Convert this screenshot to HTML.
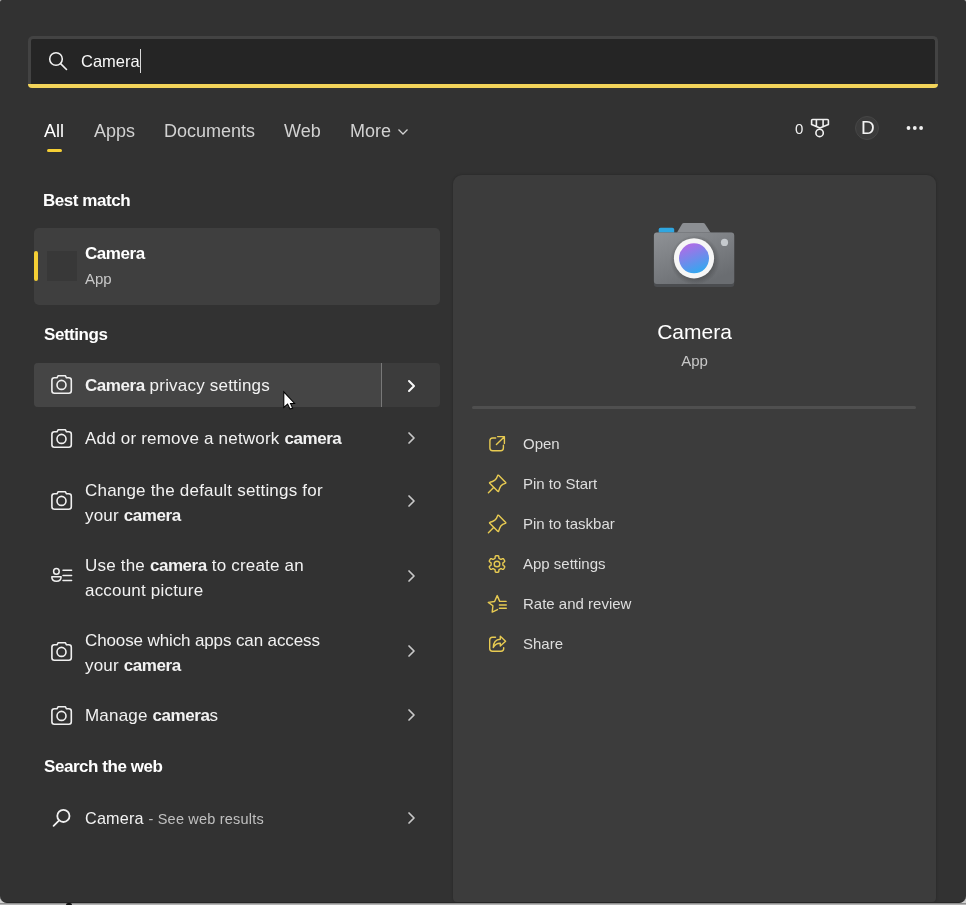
<!DOCTYPE html>
<html><head><meta charset="utf-8">
<style>
*{margin:0;padding:0;box-sizing:border-box}
html,body{width:966px;height:905px;overflow:hidden;background:#d0d0d0;font-family:"Liberation Sans",sans-serif}
#win{position:absolute;left:0;top:0;width:966px;height:903px;background:#323232;border-radius:2px 2px 7px 7px;overflow:hidden;border-bottom:1px solid #262626}
#strip1{position:absolute;left:0;top:903px;width:966px;height:1px;background:#8e8e8e}
#strip2{position:absolute;left:0;top:904px;width:966px;height:1px;background:#b4b4b4}
.a{position:absolute;white-space:nowrap}
.t,.tab,.hdr,.row,.mi{will-change:transform}
.t{position:absolute;white-space:nowrap;line-height:1}
b{font-weight:bold}
#search{position:absolute;left:28px;top:36px;width:910px;height:51.5px;background:#252525;border:3px solid #434343;border-bottom:none;border-radius:5px 5px 4px 4px}
#search .ul{position:absolute;left:-3px;right:-3px;bottom:0;height:3.5px;background:#f3d45a;border-radius:0 0 4px 4px}
.tab{position:absolute;font-size:18px;line-height:1;color:#d2d2d2;top:121.5px}
.hdr{position:absolute;font-size:17px;font-weight:bold;line-height:1;color:#fff;letter-spacing:-0.45px}
.row{position:absolute;left:85px;font-size:17px;line-height:25px;color:#f2f2f2;white-space:nowrap;letter-spacing:0.2px}
.row b{letter-spacing:-0.45px}
.ico{position:absolute;left:50px}
.chev{position:absolute;left:404px}
#panel{position:absolute;left:453px;top:175px;width:483px;height:727px;background:#3c3c3c;border-radius:9px 9px 4px 4px;box-shadow:0 0 3px rgba(0,0,0,0.25)}
.mi{position:absolute;left:523px;font-size:15px;line-height:1;color:#dedede}
.mico{position:absolute;left:486px}
</style></head><body>
<div id="strip1"></div><div id="strip2"></div><div style="position:absolute;left:66px;top:903px;width:6px;height:2px;border-radius:3px 3px 0 0;background:#111"></div>
<div id="win">
  <div id="search"><div class="ul"></div></div>
  <svg class="a" style="left:48px;top:51px" width="20" height="20" viewBox="0 0 20 20"><circle cx="8" cy="8" r="6.3" fill="none" stroke="#f0f0f0" stroke-width="1.6"/><path d="M12.6 12.6 L18.5 18.5" stroke="#f0f0f0" stroke-width="1.6" stroke-linecap="round"/></svg>
  <div class="t" style="left:81px;top:52.8px;font-size:16.5px;color:#f8f8f8">Camera</div>
  <div class="a" style="left:140px;top:49px;width:1px;height:24px;background:#d8d8d8"></div>

  <div class="tab" style="left:44px;color:#fff">All</div>
  <div class="a" style="left:47px;top:149px;width:15px;height:3px;border-radius:2px;background:#f5cf35"></div>
  <div class="tab" style="left:94px">Apps</div>
  <div class="tab" style="left:164px">Documents</div>
  <div class="tab" style="left:284px">Web</div>
  <div class="tab" style="left:350px">More</div>
  <svg class="a" style="left:397px;top:128px" width="12" height="8" viewBox="0 0 12 8"><path d="M1.5 1.5 L6 6 L10.5 1.5" fill="none" stroke="#d2d2d2" stroke-width="1.3"/></svg>

  <div class="t" style="left:795px;top:120.5px;font-size:15px;color:#f0f0f0">0</div>
  <svg class="a" style="left:809px;top:118px" width="22" height="20" viewBox="0 0 22 20"><path d="M2.6 2.6Q2.6 1.5 3.7 1.5H18.3Q19.4 1.5 19.4 2.6V6.6L10.9 10.1L2.6 6.6Z M7.4 1.8V8.3M14.1 1.8V8.3" fill="none" stroke="#f0f0f0" stroke-width="1.6" stroke-linejoin="round"/><circle cx="10.6" cy="14.9" r="3.7" fill="#323232" stroke="#f0f0f0" stroke-width="1.6"/></svg>
  <div class="a" style="left:854.5px;top:115.5px;width:24.5px;height:24.5px;border-radius:50%;background:#3b3b3b;border:1.5px solid #464646"></div>
  <div class="t" style="left:861px;top:118.4px;font-size:19px;color:#f4f4f4">D</div>
  <svg class="a" style="left:905px;top:124px" width="20" height="8" viewBox="0 0 20 8"><circle cx="3.5" cy="4" r="1.9" fill="#f0f0f0"/><circle cx="9.8" cy="4" r="1.9" fill="#f0f0f0"/><circle cx="16.1" cy="4" r="1.9" fill="#f0f0f0"/></svg>

  <!-- left column -->
  <div class="hdr" style="left:42.5px;top:191.6px">Best match</div>
  <div class="a" style="left:34px;top:228px;width:406px;height:77px;border-radius:5px;background:#3f3f3f"></div>
  <div class="a" style="left:34px;top:251px;width:3.5px;height:30px;border-radius:2px;background:#f5cf35"></div>
  <div class="a" style="left:47px;top:251px;width:30px;height:30px;background:#383838"></div>
  <div class="t" style="left:84.6px;top:245.2px;font-size:17px;font-weight:bold;color:#fff;letter-spacing:-0.45px">Camera</div>
  <div class="t" style="left:85px;top:271px;font-size:15px;color:#c8c8c8">App</div>

  <div class="hdr" style="left:43.5px;top:325.8px">Settings</div>
  <div class="a" style="left:34px;top:363px;width:406px;height:44px;border-radius:4px;background:#3c3c3c"></div>
  <div class="a" style="left:34px;top:363px;width:347px;height:44px;border-radius:4px 0 0 4px;background:#454545"></div>
  <div class="a" style="left:381px;top:363px;width:1px;height:44px;background:#787878"></div>

  <svg class="ico" style="top:374px" width="24" height="22" viewBox="0 0 24 22"><path d="M1.9 6.3Q1.9 3.8 4.4 3.8H7L8.2 1.7H15.3L16.5 3.8H18.8Q21.3 3.8 21.3 6.3V16.7Q21.3 19.2 18.8 19.2H4.4Q1.9 19.2 1.9 16.7Z" fill="none" stroke="#f0f0f0" stroke-width="1.6" stroke-linejoin="round"/><circle cx="11.5" cy="10.9" r="4.5" fill="none" stroke="#f0f0f0" stroke-width="1.6"/></svg><div class="row" style="top:372.6px"><b>Camera</b> privacy settings</div><svg class="chev" style="top:378.5px" width="14" height="14" viewBox="0 0 14 14"><path d="M5 2L10 7L5 12" fill="none" stroke="#f8f8f8" stroke-width="2" stroke-linecap="round" stroke-linejoin="round"/></svg>
  <svg class="ico" style="top:427.5px" width="24" height="22" viewBox="0 0 24 22"><path d="M1.9 6.3Q1.9 3.8 4.4 3.8H7L8.2 1.7H15.3L16.5 3.8H18.8Q21.3 3.8 21.3 6.3V16.7Q21.3 19.2 18.8 19.2H4.4Q1.9 19.2 1.9 16.7Z" fill="none" stroke="#f0f0f0" stroke-width="1.6" stroke-linejoin="round"/><circle cx="11.5" cy="10.9" r="4.5" fill="none" stroke="#f0f0f0" stroke-width="1.6"/></svg><div class="row" style="top:425.6px">Add or remove a network <b>camera</b></div><svg class="chev" style="top:431px" width="14" height="14" viewBox="0 0 14 14"><path d="M5 2L10 7L5 12" fill="none" stroke="#c8c8c8" stroke-width="1.7" stroke-linecap="round" stroke-linejoin="round"/></svg>
  <svg class="ico" style="top:490px" width="24" height="22" viewBox="0 0 24 22"><path d="M1.9 6.3Q1.9 3.8 4.4 3.8H7L8.2 1.7H15.3L16.5 3.8H18.8Q21.3 3.8 21.3 6.3V16.7Q21.3 19.2 18.8 19.2H4.4Q1.9 19.2 1.9 16.7Z" fill="none" stroke="#f0f0f0" stroke-width="1.6" stroke-linejoin="round"/><circle cx="11.5" cy="10.9" r="4.5" fill="none" stroke="#f0f0f0" stroke-width="1.6"/></svg><div class="row" style="top:477.9px">Change the default settings for<br>your <b>camera</b></div><svg class="chev" style="top:494.4px" width="14" height="14" viewBox="0 0 14 14"><path d="M5 2L10 7L5 12" fill="none" stroke="#c8c8c8" stroke-width="1.7" stroke-linecap="round" stroke-linejoin="round"/></svg>
  <svg class="ico" style="top:564px" width="24" height="22" viewBox="0 0 24 22"><circle cx="6.4" cy="7.4" r="2.8" fill="none" stroke="#f0f0f0" stroke-width="1.5"/><path d="M1.8 12.7H11.1Q11.1 17.2 6.45 17.2Q1.8 17.2 1.8 12.7Z" fill="none" stroke="#f0f0f0" stroke-width="1.5" stroke-linejoin="round"/><path d="M13 6.2H21.6M13 11.4H21.6M13 16.5H21.6" stroke="#f0f0f0" stroke-width="1.5" stroke-linecap="round"/></svg><div class="row" style="top:552.7px">Use the <b>camera</b> to create an<br>account picture</div><svg class="chev" style="top:569px" width="14" height="14" viewBox="0 0 14 14"><path d="M5 2L10 7L5 12" fill="none" stroke="#c8c8c8" stroke-width="1.7" stroke-linecap="round" stroke-linejoin="round"/></svg>
  <svg class="ico" style="top:641px" width="24" height="22" viewBox="0 0 24 22"><path d="M1.9 6.3Q1.9 3.8 4.4 3.8H7L8.2 1.7H15.3L16.5 3.8H18.8Q21.3 3.8 21.3 6.3V16.7Q21.3 19.2 18.8 19.2H4.4Q1.9 19.2 1.9 16.7Z" fill="none" stroke="#f0f0f0" stroke-width="1.6" stroke-linejoin="round"/><circle cx="11.5" cy="10.9" r="4.5" fill="none" stroke="#f0f0f0" stroke-width="1.6"/></svg><div class="row" style="top:627.9px"><span style="letter-spacing:-0.12px">Choose which apps can access</span><br>your <b>camera</b></div><svg class="chev" style="top:644.4px" width="14" height="14" viewBox="0 0 14 14"><path d="M5 2L10 7L5 12" fill="none" stroke="#c8c8c8" stroke-width="1.7" stroke-linecap="round" stroke-linejoin="round"/></svg>
  <svg class="ico" style="top:705px" width="24" height="22" viewBox="0 0 24 22"><path d="M1.9 6.3Q1.9 3.8 4.4 3.8H7L8.2 1.7H15.3L16.5 3.8H18.8Q21.3 3.8 21.3 6.3V16.7Q21.3 19.2 18.8 19.2H4.4Q1.9 19.2 1.9 16.7Z" fill="none" stroke="#f0f0f0" stroke-width="1.6" stroke-linejoin="round"/><circle cx="11.5" cy="10.9" r="4.5" fill="none" stroke="#f0f0f0" stroke-width="1.6"/></svg><div class="row" style="top:702.7px">Manage <b>camera</b>s</div><svg class="chev" style="top:708px" width="14" height="14" viewBox="0 0 14 14"><path d="M5 2L10 7L5 12" fill="none" stroke="#c8c8c8" stroke-width="1.7" stroke-linecap="round" stroke-linejoin="round"/></svg>
  <svg class="a" style="left:50px;top:806px" width="24" height="24" viewBox="0 0 24 24"><circle cx="13.4" cy="9.9" r="6.1" fill="none" stroke="#f0f0f0" stroke-width="1.8"/><path d="M8.9 14.6L3.6 19.9" stroke="#f0f0f0" stroke-width="1.8" stroke-linecap="round"/></svg><div class="row" style="top:806px;font-size:16.2px">Camera <span style="font-size:14.5px;color:#c0c0c0">- See web results</span></div><svg class="chev" style="top:810.6px" width="14" height="14" viewBox="0 0 14 14"><path d="M5 2L10 7L5 12" fill="none" stroke="#c8c8c8" stroke-width="1.7" stroke-linecap="round" stroke-linejoin="round"/></svg>

  <div class="hdr" style="left:43.5px;top:758px">Search the web</div>
  <svg class="a" style="left:282px;top:390px" width="16" height="22" viewBox="0 0 16 22"><path d="M1.8 1.8V17.3L5.6 14.1L8 18.9L10.6 18.1L8.5 13.5H12.6Z" fill="#fff" stroke="#000" stroke-width="1.05" stroke-linejoin="miter"/></svg>

  <!-- right panel -->
  <div id="panel"></div>
  <svg class="a" style="left:650px;top:218px" width="90" height="74" viewBox="0 0 90 74">
    <defs>
      <linearGradient id="bg" x1="0" y1="0" x2="0.6" y2="1"><stop offset="0" stop-color="#8f9296"/><stop offset="1" stop-color="#6a6d71"/></linearGradient>
      <linearGradient id="lg" x1="0.3" y1="0" x2="0.7" y2="1"><stop offset="0" stop-color="#b36ae6"/><stop offset="1" stop-color="#2eaaf0"/></linearGradient>
      <radialGradient id="sh" cx="0.5" cy="0.5" r="0.5"><stop offset="0.7" stop-color="#000" stop-opacity="0.25"/><stop offset="1" stop-color="#000" stop-opacity="0"/></radialGradient>
    </defs>
    <rect x="8.7" y="9.8" width="15.5" height="7" rx="1.8" fill="#2fa6e0"/>
    <path d="M26.6 15.2L32 5.9Q32.6 5 33.8 5H53.2Q54.4 5 55 5.9L61 15.2Z" fill="#8c8f93"/>
    <rect x="3.9" y="14.6" width="80.3" height="54.4" rx="3" fill="#4b4d50"/>
    <rect x="3.9" y="14.6" width="80.3" height="51.4" rx="3" fill="url(#bg)"/>
    <circle cx="45" cy="42" r="25" fill="url(#sh)"/>
    <circle cx="74.5" cy="24.4" r="3.6" fill="#c5c9cd"/>
    <circle cx="44" cy="40.3" r="20.1" fill="#f6f6f6"/>
    <circle cx="44" cy="40.3" r="15" fill="url(#lg)"/>
  </svg>
  <div class="t" style="left:453px;width:483px;text-align:center;top:321.2px;font-size:21px;color:#fff">Camera</div>
  <div class="t" style="left:453px;width:483px;text-align:center;top:352.8px;font-size:15px;color:#c8c8c8">App</div>
  <div class="a" style="left:472px;top:406px;width:444px;height:3px;border-radius:1.5px;background:#4f4f4f"></div>
  <svg class="mico" style="top:433.1px" width="22" height="22" viewBox="0 0 22 22" fill="none" stroke="#e8cb52" stroke-width="1.4" stroke-linecap="round" stroke-linejoin="round"><path d="M9.7 5H6.6Q3.9 5 3.9 7.7V15.1Q3.9 17.8 6.6 17.8H14.7Q17.4 17.8 17.4 15.1V12.2"/><path d="M10.4 11.6L18.4 3.7M11.6 3.6H18.4V10.5"/></svg>
  <div class="mi" style="top:436.4px">Open</div>
  <svg class="mico" style="top:472.7px" width="22" height="22" viewBox="0 0 22 22" fill="none" stroke="#e8cb52" stroke-width="1.4" stroke-linecap="round" stroke-linejoin="round"><path d="M12.6 2.3L19.7 9.4Q20.1 10.1 19.3 10.4Q16.4 11 14.6 13.3Q13.3 15.5 12.7 18Q12.4 18.9 11.7 18.3L3.7 10.3Q3.2 9.6 4 9.3Q6.6 8.7 8.8 7.1Q10.9 5.3 11.6 2.7Q12 1.8 12.6 2.3Z"/><path d="M7.6 14.6L2.4 19.8"/></svg>
  <div class="mi" style="top:476.0px">Pin to Start</div>
  <svg class="mico" style="top:512.7px" width="22" height="22" viewBox="0 0 22 22" fill="none" stroke="#e8cb52" stroke-width="1.4" stroke-linecap="round" stroke-linejoin="round"><path d="M12.6 2.3L19.7 9.4Q20.1 10.1 19.3 10.4Q16.4 11 14.6 13.3Q13.3 15.5 12.7 18Q12.4 18.9 11.7 18.3L3.7 10.3Q3.2 9.6 4 9.3Q6.6 8.7 8.8 7.1Q10.9 5.3 11.6 2.7Q12 1.8 12.6 2.3Z"/><path d="M7.6 14.6L2.4 19.8"/></svg>
  <div class="mi" style="top:516.0px">Pin to taskbar</div>
  <svg class="mico" style="top:552.7px" width="22" height="22" viewBox="0 0 22 22" fill="none" stroke="#e8cb52" stroke-width="1.4" stroke-linecap="round" stroke-linejoin="round"><path d="M16.90 11.00 L16.90 11.15 L16.90 11.31 L16.89 11.46 L16.88 11.62 L16.88 11.77 L16.88 11.93 L16.92 12.10 L17.06 12.29 L17.36 12.53 L17.86 12.84 L18.34 13.17 L18.62 13.47 L18.71 13.73 L18.70 13.95 L18.64 14.17 L18.57 14.37 L18.48 14.57 L18.39 14.77 L18.29 14.96 L18.18 15.15 L18.07 15.33 L17.96 15.52 L17.83 15.70 L17.70 15.87 L17.56 16.04 L17.41 16.19 L17.22 16.31 L16.95 16.36 L16.55 16.27 L16.02 16.02 L15.51 15.75 L15.14 15.60 L14.91 15.58 L14.75 15.63 L14.61 15.70 L14.48 15.78 L14.35 15.87 L14.22 15.95 L14.08 16.03 L13.95 16.11 L13.82 16.19 L13.68 16.26 L13.54 16.33 L13.41 16.40 L13.27 16.47 L13.13 16.56 L13.01 16.68 L12.91 16.89 L12.86 17.28 L12.84 17.86 L12.79 18.44 L12.67 18.83 L12.49 19.04 L12.29 19.14 L12.08 19.20 L11.87 19.24 L11.65 19.27 L11.43 19.28 L11.22 19.29 L11.00 19.30 L10.78 19.29 L10.57 19.28 L10.35 19.27 L10.13 19.24 L9.92 19.20 L9.71 19.14 L9.51 19.04 L9.33 18.83 L9.21 18.44 L9.16 17.86 L9.14 17.28 L9.09 16.89 L8.99 16.68 L8.87 16.56 L8.73 16.47 L8.59 16.40 L8.46 16.33 L8.32 16.26 L8.18 16.19 L8.05 16.11 L7.92 16.03 L7.78 15.95 L7.65 15.87 L7.52 15.78 L7.39 15.70 L7.25 15.63 L7.09 15.58 L6.86 15.60 L6.49 15.75 L5.98 16.02 L5.45 16.27 L5.05 16.36 L4.78 16.31 L4.59 16.19 L4.44 16.04 L4.30 15.87 L4.17 15.70 L4.04 15.52 L3.93 15.33 L3.82 15.15 L3.71 14.96 L3.61 14.77 L3.52 14.57 L3.43 14.37 L3.36 14.17 L3.30 13.95 L3.29 13.73 L3.38 13.47 L3.66 13.17 L4.14 12.84 L4.64 12.53 L4.94 12.29 L5.08 12.10 L5.12 11.93 L5.12 11.77 L5.12 11.62 L5.11 11.46 L5.10 11.31 L5.10 11.15 L5.10 11.00 L5.10 10.85 L5.10 10.69 L5.11 10.54 L5.12 10.38 L5.12 10.23 L5.12 10.07 L5.08 9.90 L4.94 9.71 L4.64 9.47 L4.14 9.16 L3.66 8.83 L3.38 8.53 L3.29 8.27 L3.30 8.05 L3.36 7.83 L3.43 7.63 L3.52 7.43 L3.61 7.23 L3.71 7.04 L3.82 6.85 L3.93 6.67 L4.04 6.48 L4.17 6.30 L4.30 6.13 L4.44 5.96 L4.59 5.81 L4.78 5.69 L5.05 5.64 L5.45 5.73 L5.98 5.98 L6.49 6.25 L6.86 6.40 L7.09 6.42 L7.25 6.37 L7.39 6.30 L7.52 6.22 L7.65 6.13 L7.78 6.05 L7.92 5.97 L8.05 5.89 L8.18 5.81 L8.32 5.74 L8.46 5.67 L8.59 5.60 L8.73 5.53 L8.87 5.44 L8.99 5.32 L9.09 5.11 L9.14 4.72 L9.16 4.14 L9.21 3.56 L9.33 3.17 L9.51 2.96 L9.71 2.86 L9.92 2.80 L10.13 2.76 L10.35 2.73 L10.57 2.72 L10.78 2.71 L11.00 2.70 L11.22 2.71 L11.43 2.72 L11.65 2.73 L11.87 2.76 L12.08 2.80 L12.29 2.86 L12.49 2.96 L12.67 3.17 L12.79 3.56 L12.84 4.14 L12.86 4.72 L12.91 5.11 L13.01 5.32 L13.13 5.44 L13.27 5.53 L13.41 5.60 L13.54 5.67 L13.68 5.74 L13.82 5.81 L13.95 5.89 L14.08 5.97 L14.22 6.05 L14.35 6.13 L14.48 6.22 L14.61 6.30 L14.75 6.37 L14.91 6.42 L15.14 6.40 L15.51 6.25 L16.02 5.98 L16.55 5.73 L16.95 5.64 L17.22 5.69 L17.41 5.81 L17.56 5.96 L17.70 6.13 L17.83 6.30 L17.96 6.48 L18.07 6.67 L18.18 6.85 L18.29 7.04 L18.39 7.23 L18.48 7.43 L18.57 7.63 L18.64 7.83 L18.70 8.05 L18.71 8.27 L18.62 8.53 L18.34 8.83 L17.86 9.16 L17.36 9.47 L17.06 9.71 L16.92 9.90 L16.88 10.07 L16.88 10.23 L16.88 10.38 L16.89 10.54 L16.90 10.69 L16.90 10.85Z"/><circle cx="11" cy="11" r="2.8"/></svg>
  <div class="mi" style="top:556.0px">App settings</div>
  <svg class="mico" style="top:592.7px" width="22" height="22" viewBox="0 0 22 22" fill="none" stroke="#e8cb52" stroke-width="1.4" stroke-linecap="round" stroke-linejoin="round"><path d="M11.5 16.6L6.2 19.1L6.9 12.8L2.3 9.4L8.6 8.5L11.2 2.6L13.7 8.4H20.1M13.4 12H20.3M13.4 15.3H20.3"/></svg>
  <div class="mi" style="top:596.0px">Rate and review</div>
  <svg class="mico" style="top:632.7px" width="22" height="22" viewBox="0 0 22 22" fill="none" stroke="#e8cb52" stroke-width="1.4" stroke-linecap="round" stroke-linejoin="round"><path d="M9.5 4.2H6.4Q3.7 4.2 3.7 6.9V15.6Q3.7 18.3 6.4 18.3H15Q17.7 18.3 17.7 15.6V14.6"/><path d="M14.3 3.3L19.6 8.2L14.3 13.1V10.2Q9.5 10 7.3 14.5Q7.4 6.6 14.3 6.2Z"/></svg>
  <div class="mi" style="top:636.0px">Share</div>
</div>
</body></html>
